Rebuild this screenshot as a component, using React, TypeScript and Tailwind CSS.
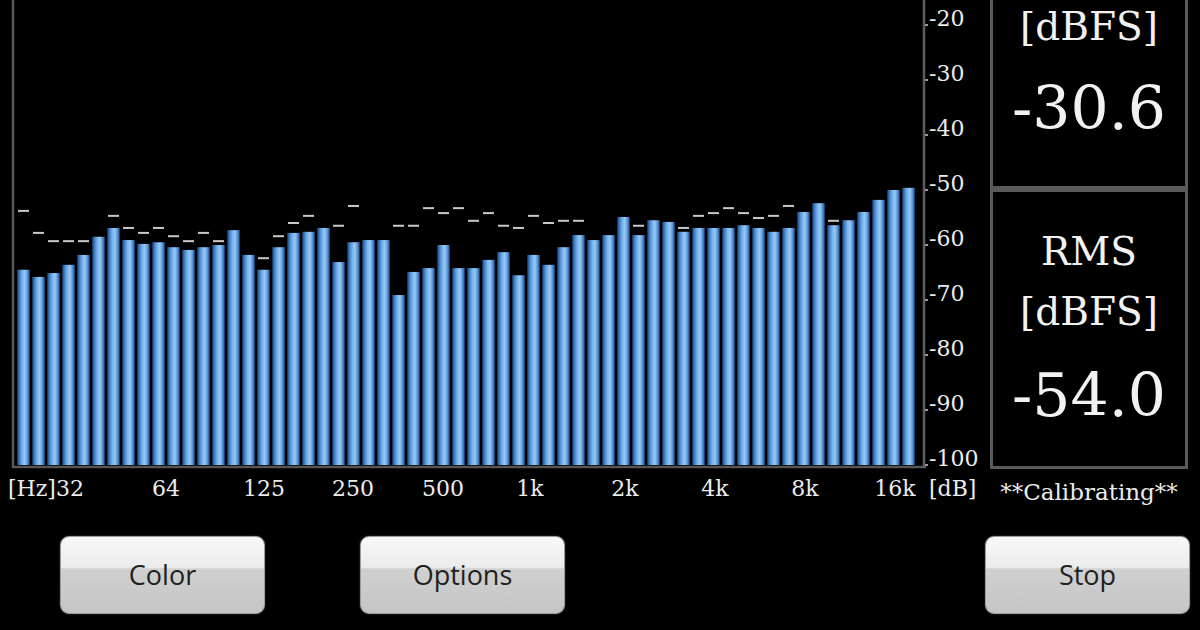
import React from 'react'

// spectrum levels per band (dBFS) and held peaks (null = peak sits on the bar)
const levels = [
  -64.5, -65.8, -65.1, -63.6, -61.8, -58.5, -56.9, -59.1, -59.8, -59.5,
  -60.4, -60.9, -60.4, -60.0, -57.3, -61.8, -64.5, -60.4, -57.8, -57.6,
  -56.9, -63.1, -59.5, -59.1, -59.1, -69.1, -64.9, -64.2, -60.0, -64.2,
  -64.2, -62.7, -61.3, -65.5, -61.8, -63.6, -60.4, -58.2, -59.1, -58.2,
  -54.9, -58.2, -55.5, -55.8, -57.6, -56.9, -56.9, -56.9, -56.4, -56.9,
  -57.6, -56.9, -54.0, -52.4, -56.4, -55.5, -54.0, -51.8, -50.0, -49.6,
]

const peaks: (number | null)[] = [
  -53.8, -57.8, -59.3, -59.3, -59.3, null, -54.7, -56.9, -57.8, -56.9,
  -58.4, -59.3, -57.8, -59.3, null, null, -62.4, -58.4, -56.0, -54.7,
  null, -56.5, -52.9, null, null, -56.5, -56.5, -53.3, -54.2, -53.3,
  -55.6, -54.2, -56.5, -56.9, -54.7, -56.0, -55.6, -55.6, null, null,
  null, -56.5, null, null, -56.9, -54.7, -54.2, -53.3, -54.2, -55.1,
  -54.7, -52.9, null, null, -55.6, null, null, null, null, null,
]

const freqLabels: [string, number][] = [
  ['64', 166], ['125', 264], ['250', 353], ['500', 443],
  ['1k', 530], ['2k', 625], ['4k', 715], ['8k', 805], ['16k', 895],
]

const BASE = 465
const dbToY = (db: number) => BASE - (db + 100) * 5.5

const serif = '"DejaVu Serif", "Liberation Serif", serif'

function Spectrum() {
  return (
    <svg width={990} height={510} viewBox="0 0 990 510" className="block shrink-0">
      <defs>
        <linearGradient id="bar" x1="0" x2="1" y1="0" y2="0">
          <stop offset="0%" stopColor="#0a2548" />
          <stop offset="14%" stopColor="#3270b6" />
          <stop offset="38%" stopColor="#72ade9" />
          <stop offset="60%" stopColor="#96c9f5" />
          <stop offset="84%" stopColor="#4e8dd4" />
          <stop offset="100%" stopColor="#0c2c58" />
        </linearGradient>
      </defs>

      {/* bars */}
      {levels.map((db, i) => {
        const x = 17 + i * 15
        const y = dbToY(db)
        const p = peaks[i]
        return (
          <g key={i}>
            <rect x={x} y={y} width={13} height={BASE - y} fill="url(#bar)" />
            {p !== null && <rect x={x + 1} y={dbToY(p) - 1} width={11} height={2} fill="#c8c8c8" />}
          </g>
        )
      })}

      {/* axes */}
      <line x1={13} y1={0} x2={13} y2={468} stroke="#565656" strokeWidth={2.5} />
      <line x1={12} y1={467} x2={926} y2={467} stroke="#565656" strokeWidth={2.5} />
      <line x1={924} y1={0} x2={924} y2={468} stroke="#5e5e5e" strokeWidth={2.5} />

      {/* dB scale */}
      {Array.from({ length: 9 }, (_, i) => (
        <g key={i}>
          <rect x={925} y={24 + i * 55} width={3} height={2} fill="#9a9a9a" />
          <text x={929} y={26 + i * 55} fill="#ececec" fontSize={22} fontFamily={serif}>
            {-20 - i * 10}
          </text>
        </g>
      ))}

      {/* frequency scale */}
      <text x={8} y={496} fill="#ececec" fontSize={22} fontFamily={serif}>[Hz]32</text>
      {freqLabels.map(([t, cx]) => (
        <text key={t} x={cx} y={496} fill="#ececec" fontSize={22} fontFamily={serif} textAnchor="middle">
          {t}
        </text>
      ))}
      <text x={929} y={496} fill="#ececec" fontSize={22} fontFamily={serif}>[dB]</text>
    </svg>
  )
}

function Btn({ label, className = '' }: { label: string; className?: string }) {
  return (
    <button
      className={`w-[205px] h-[78px] rounded-[9px] border border-[#9a9a9a] shadow-[0_0_2px_#444] bg-[linear-gradient(to_bottom,#f9f9f9_0%,#ebebeb_40%,#d0d0d0_42%,#c5c5c5_100%)] text-[27px] text-[#1f1f1f] ${className}`}
      style={{ fontFamily: '"Open Sans", "Noto Sans", sans-serif' }}
    >
      {label}
    </button>
  )
}

export default function App() {
  return (
    <div className="w-[1200px] h-[630px] bg-black overflow-hidden select-none">
      <div className="flex h-[510px]">
        <Spectrum />

        <div className="w-[198px] flex flex-col text-[#f2f2f2]" style={{ fontFamily: serif }}>
          {/* peak meter (label row above is off-screen) */}
          <div className="h-[189px] border-x-[3px] border-b-[3px] border-[#5a5a5a] flex flex-col items-center pt-[4px]">
            <div className="text-[39px] leading-[46px]">[dBFS]</div>
            <div className="text-[60px] leading-[70px] mt-[23px]">-30.6</div>
          </div>

          {/* RMS meter */}
          <div className="h-[280px] border-[3px] border-[#5a5a5a] flex flex-col items-center pt-[30px]">
            <div className="text-[39px] leading-[60px]">RMS</div>
            <div className="text-[39px] leading-[60px]">[dBFS]</div>
            <div className="text-[60px] leading-[70px] mt-[18px]">-54.0</div>
          </div>

          <div
            className="text-[23px] leading-[28px] mt-[9px] text-center whitespace-nowrap -mx-[4px] text-[#ececec]"
            style={{ fontFamily: serif }}
          >
            **Calibrating**
          </div>
        </div>
      </div>

      <div className="flex pt-[26px] pl-[60px] pr-[10px]">
        <Btn label="Color" />
        <Btn label="Options" className="ml-[95px]" />
        <Btn label="Stop" className="ml-auto" />
      </div>
    </div>
  )
}
